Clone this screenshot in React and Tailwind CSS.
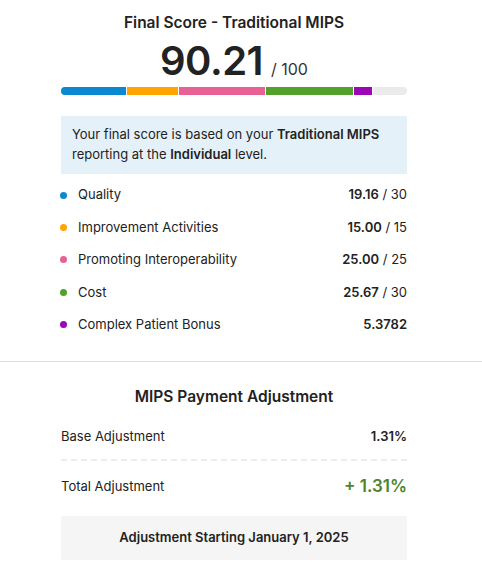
import React from 'react';

const categories = [
  { name: 'Quality', score: '19.16', max: '30', value: 19.16, color: 'bg-[#0a89d2]' },
  { name: 'Improvement Activities', score: '15.00', max: '15', value: 15, color: 'bg-[#ffa400]' },
  { name: 'Promoting Interoperability', score: '25.00', max: '25', value: 25, color: 'bg-[#e86194]' },
  { name: 'Cost', score: '25.67', max: '30', value: 25.67, color: 'bg-[#53a12b]' },
  { name: 'Complex Patient Bonus', score: '5.3782', max: null, value: 5.3782, color: 'bg-[#9b06b7]' },
];

const App = () => {
  return (
    <div className="w-[482px] min-h-[568px] bg-white text-[#222] font-['Inter','Liberation_Sans',sans-serif]">
      {/* Final score */}
      <div className="pl-[61px] pr-[75px] pt-[12px] pb-[20px]">
        <h2 className="text-center text-[15.5px] font-semibold leading-[22px] text-[#222]">
          Final Score - Traditional MIPS
        </h2>
        <div className="flex items-baseline justify-center mt-[4px] h-[46px]">
          <span className="text-[40px] font-semibold leading-[46px] tracking-[-0.5px] text-[#222]">90.21</span>
          <span className="ml-[8px] text-[16px] text-[#333]">/ 100</span>
        </div>
        <div className="mt-[3px] flex h-[8px] w-full rounded-full overflow-hidden bg-[#ebebeb]">
          {categories.map((c) => (
            <div
              key={c.name}
              className={`${c.color} h-full border-r border-white`}
              style={{ width: `${c.value}%` }}
            />
          ))}
        </div>

        <div className="mt-[21px] bg-[#e5f1f9] px-[11px] pt-[8px] pb-[10px] text-[13px] leading-[20px] text-[#222]">
          Your final score is based on your <span className="font-semibold">Traditional MIPS</span>{' '}
          reporting at the <span className="font-semibold">Individual</span> level.
        </div>

        <div className="mt-[5px] flex flex-col">
          {categories.map((c) => (
            <div key={c.name} className="flex items-center justify-between h-[32.4px] text-[13px]">
              <div className="flex items-center">
                <span className={`w-[7px] h-[7px] rounded-full ${c.color} ml-[-1px]`} />
                <span className="ml-[11px] text-[#222]">{c.name}</span>
              </div>
              <div className="text-[#222]">
                <span className="font-semibold">{c.score}</span>
                {c.max && <span> / {c.max}</span>}
              </div>
            </div>
          ))}
        </div>
      </div>

      <div className="border-t border-[#dcdcdc]" />

      {/* Payment adjustment */}
      <div className="pl-[61px] pr-[75px] pt-[24px]">
        <h2 className="text-center text-[15.5px] font-semibold leading-[22px] text-[#222]">
          MIPS Payment Adjustment
        </h2>
        <div className="mt-[16px] flex items-center justify-between text-[13px] h-[26px]">
          <span>Base Adjustment</span>
          <span className="font-semibold">1.31%</span>
        </div>
        <div className="mt-[9px] border-t-2 border-dashed border-[#ececec]" />
        <div className="mt-[13px] flex items-center justify-between h-[26px]">
          <span className="text-[13px]">Total Adjustment</span>
          <span className="text-[17px] font-semibold text-[#4c852b]">+ 1.31%</span>
        </div>
        <div className="mt-[16px] bg-[#f5f5f5] rounded-[2px] h-[44px] flex items-center justify-center text-[13px] font-semibold">
          Adjustment Starting January 1, 2025
        </div>
      </div>
    </div>
  );
};

export default App;
